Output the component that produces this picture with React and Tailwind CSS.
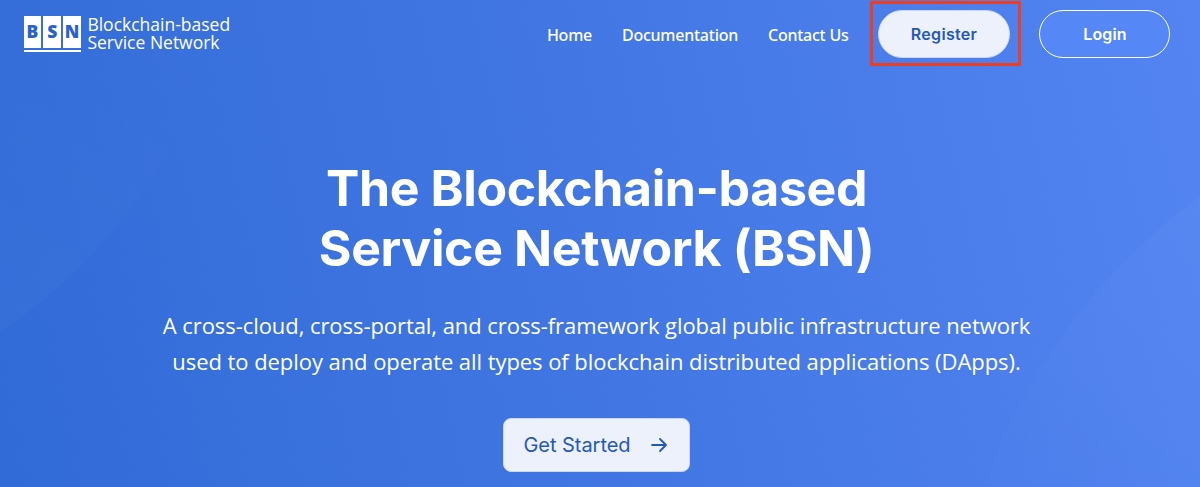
import React from "react";

const LOGO_LETTERS = ["B", "S", "N"];

function Logo() {
  return (
    <a className="mt-px flex h-9 items-start gap-[6.5px]" href="#">
      <span className="flex flex-col gap-[2px]">
        <span className="flex gap-[2px]">
          {LOGO_LETTERS.map((letter) => (
            <span
              key={letter}
              className="flex h-8 w-[17.8px] items-center justify-center bg-white font-['Open_Sans'] text-[17.5px] leading-none font-extrabold text-[#2a62cc]"
            >
              {letter}
            </span>
          ))}
        </span>
        <span className="h-[2px] bg-white" />
      </span>
      <span className="-mt-px flex flex-col font-['Open_Sans'] text-[17.5px] leading-[18px] font-normal whitespace-nowrap">
        <span>Blockchain-based</span>
        <span>Service Network</span>
      </span>
    </a>
  );
}

function Nav() {
  return (
    <nav className="mt-[2px] flex gap-[30px] font-['Noto_Sans'] text-base leading-6 font-medium tracking-[-0.25px] whitespace-nowrap">
      <a href="#">Home</a>
      <a href="#">Documentation</a>
      <a href="#">Contact Us</a>
    </nav>
  );
}

function Backdrop() {
  return (
    <svg className="absolute inset-0 h-full w-full" viewBox="0 0 1200 487" aria-hidden="true">
      <defs>
        <linearGradient id="leftGlow" gradientUnits="userSpaceOnUse" x1="0" y1="340" x2="210" y2="40">
          <stop offset="0" stopColor="white" stopOpacity="0.025" />
          <stop offset="1" stopColor="white" stopOpacity="0" />
        </linearGradient>
        <linearGradient id="rightGlow" gradientUnits="userSpaceOnUse" x1="1200" y1="200" x2="990" y2="487">
          <stop offset="0" stopColor="white" stopOpacity="0.03" />
          <stop offset="1" stopColor="white" stopOpacity="0.005" />
        </linearGradient>
      </defs>
      <circle cx="-317" cy="-133" r="563" fill="url(#leftGlow)" />
      <circle cx="1553" cy="684" r="602" fill="url(#rightGlow)" />
    </svg>
  );
}

export default function App() {
  return (
    <div className="relative h-[487px] w-[1200px] overflow-hidden bg-linear-[78deg,#316bd7_0%,#4277e3_50%,#5384f2_100%] font-['Inter',sans-serif] text-white">
      <Backdrop />
      <div className="relative flex flex-col">
        <header className="flex h-[67px] w-full items-center pl-[23.5px]">
          <Logo />
          <div className="ml-auto flex items-center pr-[30px]">
            <Nav />
            <div className="ml-[21.5px] border-[3px] border-[#ee3e22] pt-[6px] pr-2 pb-[5px] pl-[5px]">
              <button className="block h-12 w-[132px] rounded-full border border-[#cbd5ef] bg-[#edf1fc] pb-px text-base font-semibold tracking-[0.3px] text-[#2458bd]">
                Register
              </button>
            </div>
            <button className="mt-px ml-[18px] h-12 w-[131px] rounded-full border-[1.5px] border-white bg-[#5587f6] pl-px text-base font-semibold tracking-[0.1px]">
              Login
            </button>
          </div>
        </header>
        <main className="flex flex-col items-center pr-[7px]">
          <h1 className="mt-[91px] text-center text-[50px] leading-[60px] font-bold tracking-[-0.38px] whitespace-nowrap">
            The Blockchain-based
            <br />
            Service Network (BSN)
          </h1>
          <p className="mt-[29px] text-center font-['Open_Sans'] text-[22px] leading-9 font-normal tracking-[-0.06px] whitespace-nowrap">
            A cross-cloud, cross-portal, and cross-framework global public infrastructure network
            <br />
            used to deploy and operate all types of blockchain distributed applications (DApps).
          </p>
          <button className="mt-[39px] flex h-[54px] w-[187px] items-center rounded-lg border border-[#cbd5ef] bg-[#edf1fc] pl-[19.5px] text-xl tracking-[-0.05px] text-[#2458bd]">
            Get Started
            <svg className="ml-5 h-4 w-4" viewBox="0 0 16 16" fill="none" stroke="currentColor" strokeWidth="1.8" strokeLinecap="round" strokeLinejoin="round">
              <path d="M1 8H15M9 2L15 8L9 14" />
            </svg>
          </button>
        </main>
      </div>
    </div>
  );
}
